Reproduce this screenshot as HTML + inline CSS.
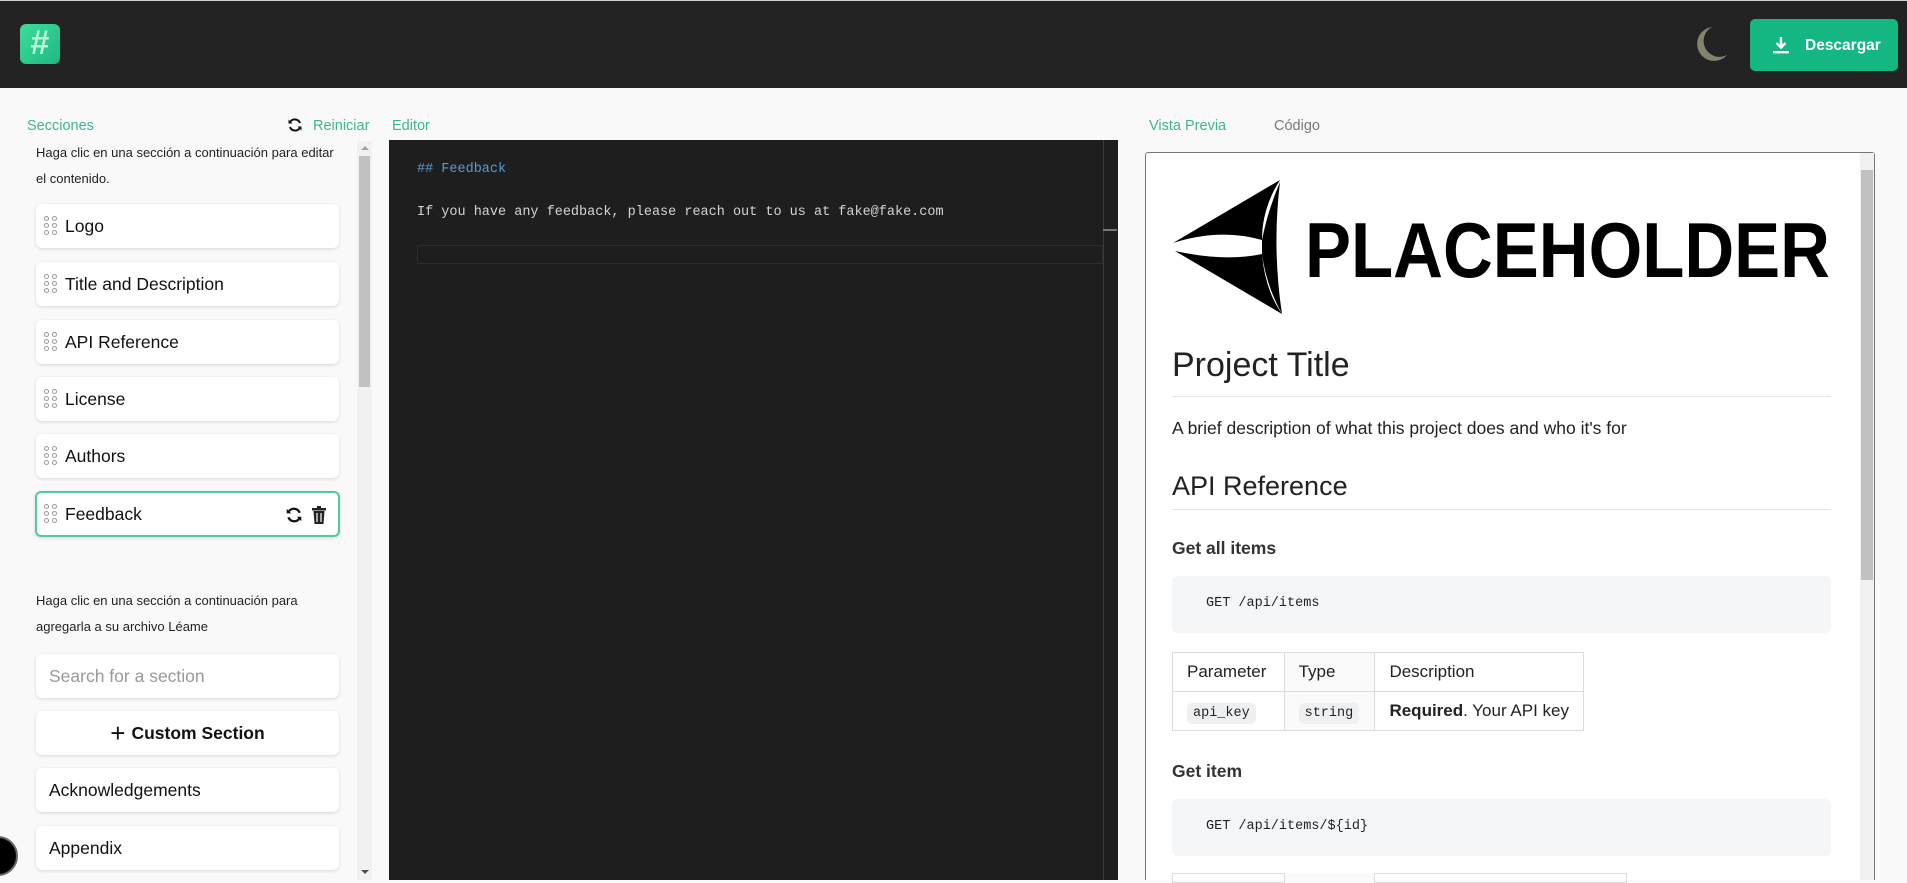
<!DOCTYPE html>
<html><head><meta charset="utf-8">
<style>
*{box-sizing:border-box;margin:0;padding:0}
body{width:1907px;height:880px;overflow:hidden;background:#f9f9f9;font-family:"Liberation Sans",sans-serif;position:relative}
.abs{position:absolute}
.hdr{left:0;top:0;width:1907px;height:88px;background:#232323;border-top:1px solid #d0d0d0}
.green{color:#3fb68a}
.card{position:absolute;left:36px;width:303px;height:44px;background:#fff;border-radius:6px;box-shadow:0 1px 3px rgba(0,0,0,.14);font-size:17.5px;color:#111;display:flex;align-items:center}
.dots{width:14px;height:20px;margin-left:8px;margin-right:7px;display:grid;grid-template-columns:6px 6px;gap:1px 2px}
.dots i{width:5px;height:5px;border:1px solid #999;border-radius:50%;display:block}
.note{position:absolute;left:36px;font-size:13px;color:#222;line-height:26px}
.mono{font-family:"Liberation Mono","DejaVu Sans Mono",monospace}
.pv{font-family:"Liberation Sans",sans-serif;color:#222}
table{border-collapse:collapse}
td{border:1px solid #dcdcdc;font-size:17px;padding:0 14px;height:39px;white-space:nowrap}
.tag{background:#eff0f2;border-radius:5px;padding:3px 6px;font-size:13.5px}
</style></head><body>
<div class="abs hdr"></div>
<div class="abs" style="left:20px;top:24px;width:40px;height:40px;border-radius:6px;background:linear-gradient(135deg,#3ddc9e,#1fb882);"></div>
<div class="abs" style="left:20px;top:22px;width:40px;height:40px;color:#b9f5d9;font-size:34px;font-weight:bold;text-align:center;line-height:42px">#</div>
<svg class="abs" style="left:1690px;top:24px" width="40" height="40" viewBox="0 0 40 40"><path d="M22 3 A17 17 0 1 0 37 31 A14 14 0 1 1 22 3 Z" fill="#85826f"/></svg>
<div class="abs" style="left:1750px;top:19px;width:148px;height:52px;background:#14b681;border-radius:5px;color:#fff;font-weight:bold;font-size:15.5px;line-height:54px;padding-left:55px">Descargar</div>
<svg class="abs" style="left:1772px;top:36px" width="18" height="18" viewBox="0 0 18 18"><path d="M9 1v10M4.5 7L9 11.5 13.5 7" stroke="#fff" stroke-width="2.4" fill="none"/><rect x="1" y="15" width="16" height="2.4" fill="#fff"/></svg>

<div class="abs green" style="left:27px;top:118px;font-size:14.5px">Secciones</div>
<svg class="abs" style="left:287px;top:117px" width="16" height="16" viewBox="0 0 16 16"><path d="M13 6A5.5 5.5 0 0 0 3.2 5M3 10a5.5 5.5 0 0 0 9.8 1" stroke="#111" stroke-width="2" fill="none"/><path d="M1.5 2.5v4h4z M14.5 13.5v-4h-4z" fill="#111"/></svg>
<div class="abs green" style="left:313px;top:118px;font-size:14.5px">Reiniciar</div>
<div class="abs green" style="left:392px;top:118px;font-size:14.5px">Editor</div>
<div class="abs green" style="left:1149px;top:118px;font-size:14.5px">Vista Previa</div>
<div class="abs" style="left:1274px;top:118px;font-size:14.5px;color:#777">Código</div>

<div class="note" style="top:140px">Haga clic en una sección a continuación para editar<br>el contenido.</div>
<div class="card" style="top:204px"><div class="dots"><i></i><i></i><i></i><i></i><i></i><i></i></div>Logo</div>
<div class="card" style="top:262px"><div class="dots"><i></i><i></i><i></i><i></i><i></i><i></i></div>Title and Description</div>
<div class="card" style="top:320px"><div class="dots"><i></i><i></i><i></i><i></i><i></i><i></i></div>API Reference</div>
<div class="card" style="top:377px"><div class="dots"><i></i><i></i><i></i><i></i><i></i><i></i></div>License</div>
<div class="card" style="top:434px"><div class="dots"><i></i><i></i><i></i><i></i><i></i><i></i></div>Authors</div>
<div class="card" style="top:491px;border:2px solid #4fcc9f;left:35px;width:305px;height:46px"><div class="dots" style="margin-left:7px"><i></i><i></i><i></i><i></i><i></i><i></i></div>Feedback
<svg style="position:absolute;left:248px;top:13px" width="18" height="18" viewBox="0 0 16 16"><path d="M13 6A5.5 5.5 0 0 0 3.2 5M3 10a5.5 5.5 0 0 0 9.8 1" stroke="#111" stroke-width="2" fill="none"/><path d="M1.5 2.5v4h4z M14.5 13.5v-4h-4z" fill="#111"/></svg>
<svg style="position:absolute;left:275px;top:13px" width="14" height="18" viewBox="0 0 14 18"><rect x="0" y="2" width="14" height="2.5" fill="#222"/><rect x="5" y="0" width="4" height="3" fill="#222"/><path d="M1.5 5h11l-1 13h-9z" fill="#222"/><path d="M5 7v9M9 7v9" stroke="#fff" stroke-width="1.2"/></svg></div>
<div class="note" style="top:588px">Haga clic en una sección a continuación para<br>agregarla a su archivo Léame</div>
<div class="card" style="top:654px;color:#999;padding-left:13px">Search for a section</div>
<div class="card" style="top:711px;justify-content:center;font-weight:bold"><span style="font-size:26px;font-weight:normal;margin-right:6px;line-height:20px">+</span>Custom Section</div>
<div class="card" style="top:768px;padding-left:13px">Acknowledgements</div>
<div class="card" style="top:826px;padding-left:13px">Appendix</div>
<div class="abs" style="left:-22px;top:836px;width:40px;height:40px;border-radius:50%;background:#000;border:2px solid #666"></div>
<div class="abs" style="left:357px;top:141px;width:15px;height:739px;background:#f1f1f1"></div>
<div class="abs" style="left:359px;top:156px;width:11px;height:231px;background:#c1c1c1"></div>
<div class="abs" style="left:361px;top:146px;width:0;height:0;border:4px solid transparent;border-bottom-color:#a3a3a3;border-top:0"></div>
<div class="abs" style="left:361px;top:870px;width:0;height:0;border:4px solid transparent;border-top-color:#505050;border-bottom:0"></div>

<div class="abs" style="left:389px;top:140px;width:729px;height:740px;background:#1e1e1e"></div>
<div class="abs" style="left:1103px;top:140px;width:15px;height:740px;border-left:1px solid #3a3a3a"></div>
<div class="abs" style="left:1103px;top:229px;width:14px;height:2px;background:#777"></div>
<div class="abs" style="left:417px;top:245px;width:686px;height:19px;border:1px solid #2c2c2c"></div>
<div class="abs mono" style="left:417px;top:162px;font-size:13.5px;color:#569cd6">## Feedback</div>
<div class="abs mono" style="left:417px;top:205px;font-size:13.5px;color:#d4d4d4">If you have any feedback, please reach out to us at fake@fake.com</div>

<div class="abs" style="left:1145px;top:152px;width:730px;height:728px;background:#fff;border:1px solid #777;border-bottom:0;border-radius:3px 3px 0 0"></div>
<div class="abs" style="left:1860px;top:153px;width:14px;height:727px;background:#f1f1f1"></div>
<div class="abs" style="left:1861px;top:170px;width:12px;height:410px;background:#c1c1c1"></div>
<svg class="abs" style="left:1170px;top:178px" width="665" height="140" viewBox="1170 178 665 140">
<path d="M1280 180 L1173 243 Q1220 228 1262 240 Q1262 208 1280 180 Z" fill="#000"/>
<path d="M1175 251 Q1225 262 1262 254 Q1265 290 1282 314 Z" fill="#000"/>
<path d="M1262 240 Q1268 210 1280 182 Q1272 248 1282 314 Q1266 285 1262 254 Z" fill="#000"/>
<text x="1305" y="277" font-family="Liberation Sans" font-weight="bold" font-size="78" textLength="525" lengthAdjust="spacingAndGlyphs" fill="#000">PLACEHOLDER</text>
</svg>
<div class="abs pv" style="left:1172px;top:346px;font-size:34px">Project Title</div>
<div class="abs" style="left:1172px;top:396px;width:659px;height:1px;background:#e3e3e3"></div>
<div class="abs pv" style="left:1172px;top:418px;font-size:17.5px">A brief description of what this project does and who it's for</div>
<div class="abs pv" style="left:1172px;top:471px;font-size:27px">API Reference</div>
<div class="abs" style="left:1172px;top:509px;width:659px;height:1px;background:#e3e3e3"></div>
<div class="abs pv" style="left:1172px;top:538px;font-size:17.5px;font-weight:bold;color:#333">Get all items</div>
<div class="abs" style="left:1172px;top:576px;width:659px;height:57px;background:#f5f6f8;border-radius:6px"></div>
<div class="abs mono" style="left:1206px;top:596px;font-size:13.5px;color:#222">GET /api/items</div>
<table class="abs pv" style="left:1172px;top:652px;width:412px">
<tr><td style="width:112px">Parameter</td><td style="width:91px;background:#fafafa">Type</td><td>Description</td></tr>
<tr><td><span class="tag mono">api_key</span></td><td style="background:#fafafa"><span class="tag mono">string</span></td><td><b>Required</b>. Your API key</td></tr>
</table>
<div class="abs pv" style="left:1172px;top:761px;font-size:17.5px;font-weight:bold;color:#333">Get item</div>
<div class="abs" style="left:1172px;top:799px;width:659px;height:57px;background:#f5f6f8;border-radius:6px"></div>
<div class="abs mono" style="left:1206px;top:819px;font-size:13.5px;color:#222">GET /api/items/${id}</div>
<div class="abs" style="left:1172px;top:873px;width:455px;height:10px;border:1px solid #dcdcdc"></div>
<div class="abs" style="left:1284px;top:873px;width:91px;height:10px;border-left:1px solid #dcdcdc;border-right:1px solid #dcdcdc;background:#fafafa"></div>
</body></html>
